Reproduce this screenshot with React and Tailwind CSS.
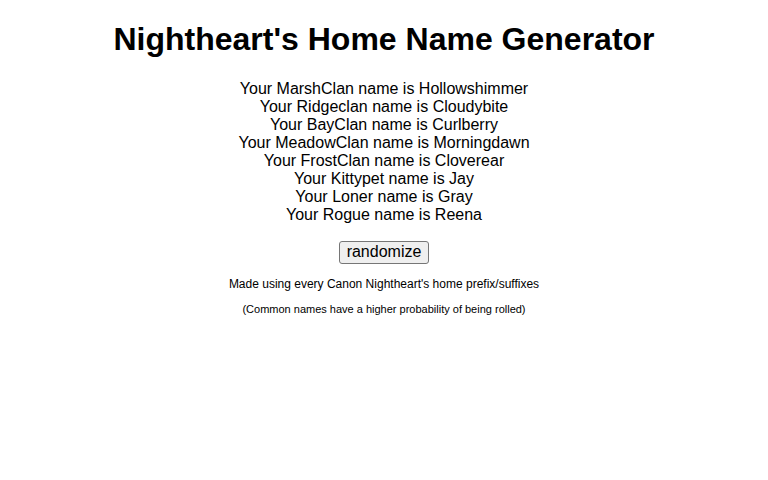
import React, { useState } from "react";

const prefixes = ["Hollow", "Cloudy", "Curl", "Morning", "Clover", "Ash", "Fern", "Moss"];
const suffixes = ["shimmer", "bite", "berry", "dawn", "ear", "tail", "pelt", "heart"];

const initial = [
  ["MarshClan", "Hollowshimmer"],
  ["Ridgeclan", "Cloudybite"],
  ["BayClan", "Curlberry"],
  ["MeadowClan", "Morningdawn"],
  ["FrostClan", "Cloverear"],
  ["Kittypet", "Jay"],
  ["Loner", "Gray"],
  ["Rogue", "Reena"],
];

function pick(list) {
  return list[Math.floor(Math.random() * list.length)];
}

export default function App() {
  const [names, setNames] = useState(initial);

  function randomize() {
    setNames(names.map(([clan, name], i) => [clan, i < 5 ? pick(prefixes) + pick(suffixes) : name]));
  }

  return (
    <div className="text-center text-black bg-white font-['Liberation_Sans',Arial,sans-serif]">
      <h1 className="text-[32px] font-bold leading-[37px] pt-[21px] mb-[22px]">
        Nightheart's Home Name Generator
      </h1>
      <div className="text-[16px] leading-[18px]">
        {names.map(([clan, name]) => (
          <div key={clan}>
            Your {clan} name is {name}
          </div>
        ))}
      </div>
      <div className="mt-[16px]">
        <button
          onClick={randomize}
          className="text-[16px] leading-[18px] px-[6px] py-[1px] border border-[#767676] bg-[#efefef] rounded-[3px] h-[23px] w-[90px] text-black"
        >
          randomize
        </button>
      </div>
      <p className="text-[12px] leading-[14px] mt-[13px]">
        Made using every Canon Nightheart's home prefix/suffixes
      </p>
      <p className="text-[11px] leading-[13px] mt-[12px]">
        (Common names have a higher probability of being rolled)
      </p>
    </div>
  );
}
